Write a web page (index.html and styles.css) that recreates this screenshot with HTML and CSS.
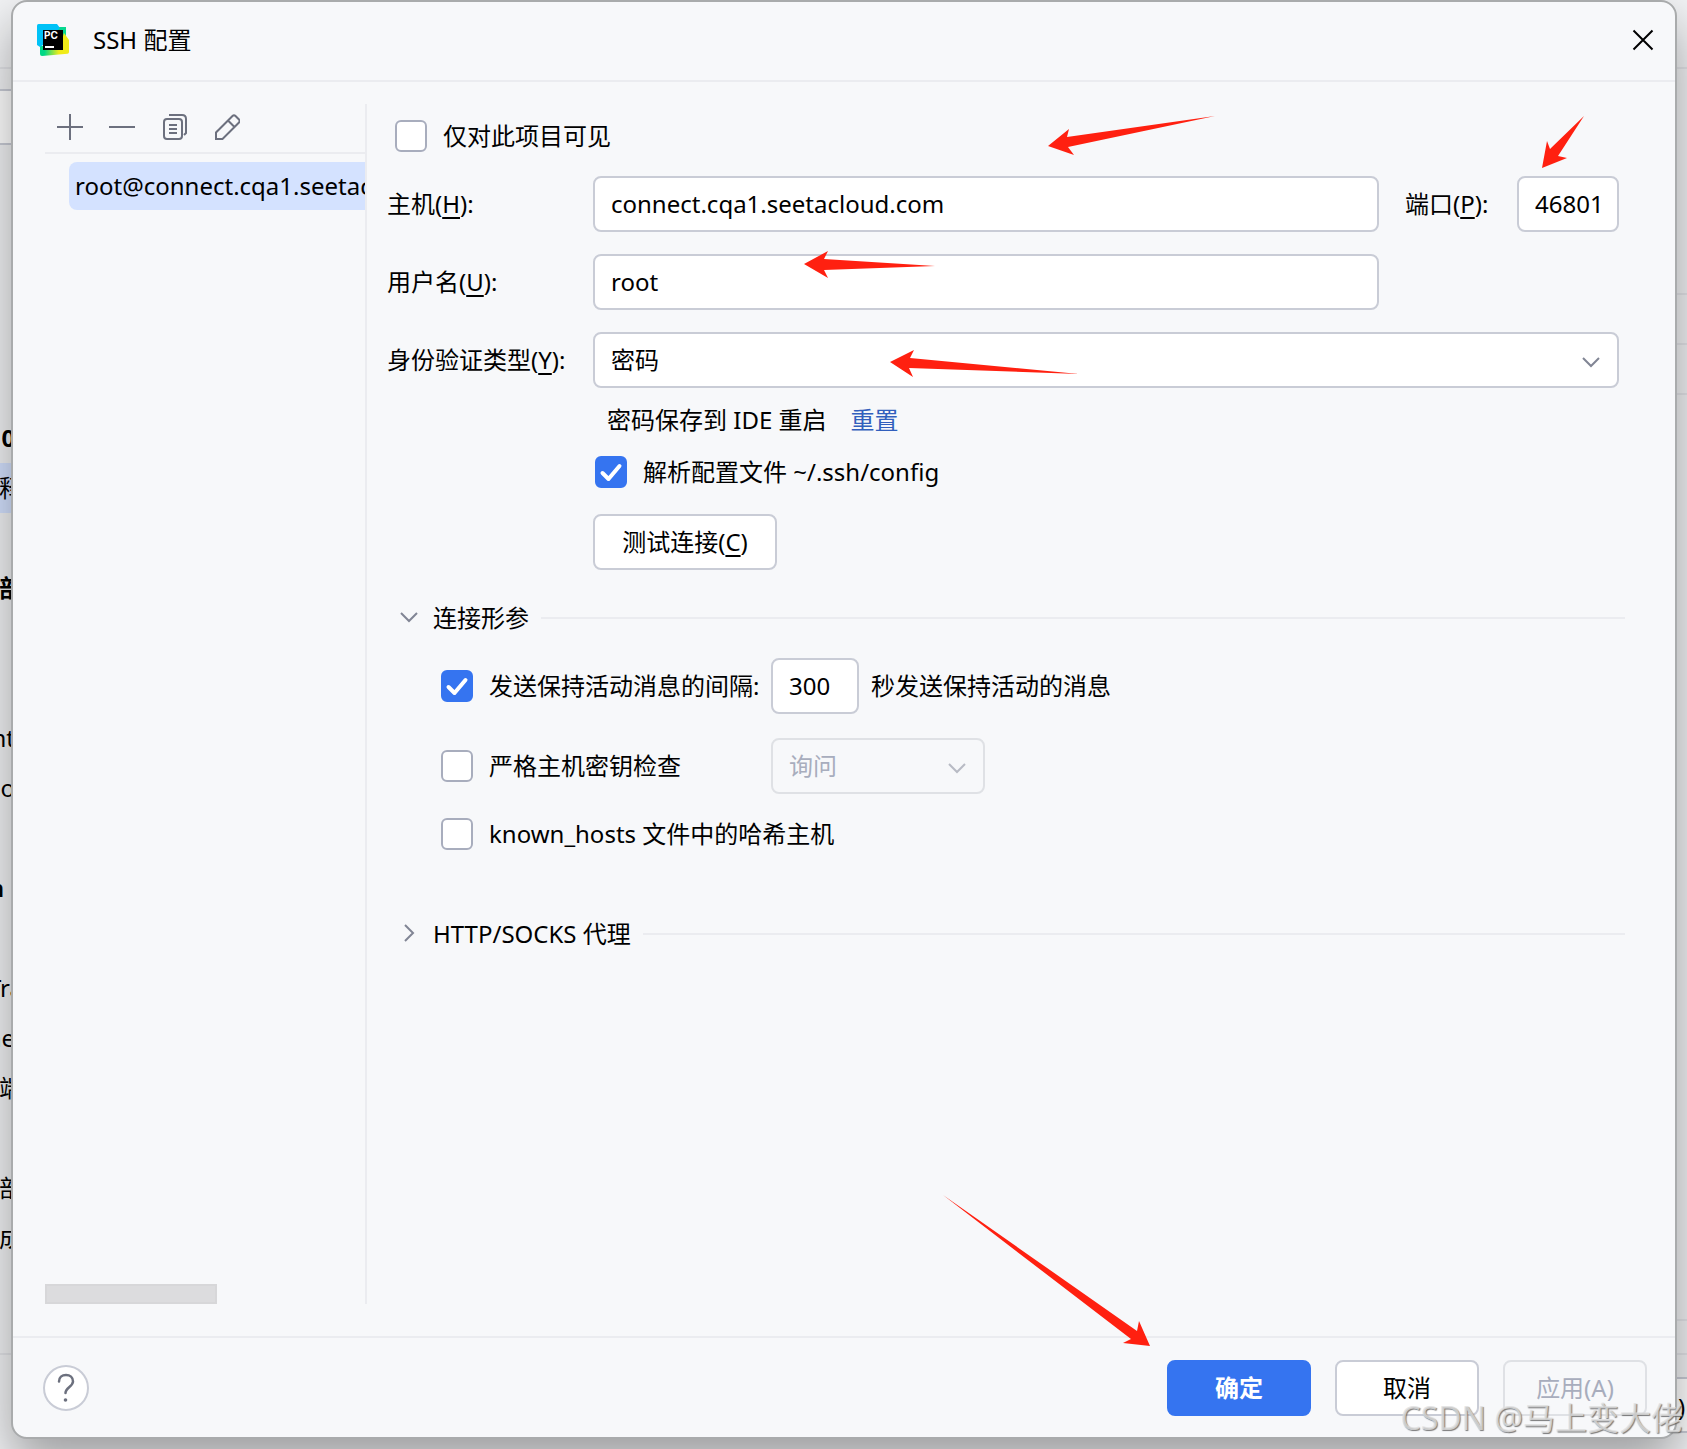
FILE: index.html
```html
<!DOCTYPE html>
<html lang="zh-CN">
<head>
<meta charset="utf-8">
<title>SSH 配置</title>
<link rel="stylesheet" href="styles.css">
</head>
<body>
<div class="screen">
  <div class="parent-window" aria-hidden="true">
    <div class="parent-left">
      <div class="parent-head"></div>
      <div class="parent-search"></div>
      <ul class="parent-list">
        <li class="strong">0-</li>
        <li class="current">释</li>
        <li></li>
        <li class="strong">部</li>
        <li></li>
        <li></li>
        <li class="mid">nt</li>
        <li class="mid">o</li>
        <li></li>
        <li class="strong near">n</li>
        <li></li>
        <li>Tra</li>
        <li class="mid">ne</li>
        <li>端</li>
        <li></li>
        <li>部</li>
        <li>成</li>
      </ul>
      <div class="parent-foot"></div>
    </div>
    <div class="parent-right">
      <div class="parent-head"></div>
      <div class="rule rule-first"></div>
      <div class="rule"></div>
      <div class="rule"></div>
      <div class="rule rule-low"></div>
      <div class="rule rule-foot"></div>
      <div class="parent-button">)</div>
    </div>
  </div>

  <main class="dialog">
    <header class="titlebar">
      <svg class="logo" viewBox="0 0 32 32" aria-hidden="true">
        <defs>
          <linearGradient id="lg" x1="0" y1="0" x2="1" y2="0">
            <stop offset="0.15" stop-color="#00d886"/><stop offset="0.65" stop-color="#f0eb18"/>
          </linearGradient>
        </defs>
        <path d="M18 3h11v12H18z" fill="#07d890"/>
        <path d="M3 22h20l4-13 5 7v12q0 1.500-1.500 1.700L5 32q-2 0-2-2z" fill="url(#lg)"/>
        <path d="M1.500 0H20l3 4-17 17-3 2-3-2V1.500Q0 0 1.500 0z" fill="#00c2f7"/>
        <path d="M6 6h20v20H6z" fill="#000"/>
        <text x="7" y="15" class="logo-text">PC</text>
        <path d="M8 22h9v2H8z" fill="#fff"/>
      </svg>
      <h1 class="title">SSH 配置</h1>
      <button class="icon-button close" type="button" aria-label="关闭">
        <svg width="22" height="22" viewBox="0 0 22 22"><path d="M1.500 1.500l19 19M20.500 1.500l-19 19" stroke="#000" stroke-width="2" fill="none"/></svg>
      </button>
    </header>

    <div class="content">
      <aside class="sidebar">
        <div class="toolbar">
          <button class="icon-button" type="button" aria-label="添加">
            <svg width="28" height="28" viewBox="0 0 28 28"><path d="M14 1v26M1 14h26"/></svg>
          </button>
          <button class="icon-button" type="button" aria-label="移除">
            <svg width="28" height="28" viewBox="0 0 28 28"><path d="M1 14h26"/></svg>
          </button>
          <button class="icon-button" type="button" aria-label="复制">
            <svg width="28" height="28" viewBox="0 0 28 28"><rect x="4" y="6" width="18" height="20" rx="3"/><path d="M9 2h13q4 0 4 4v14l-2 2M9 12h8M9 16h8M9 20h8"/></svg>
          </button>
          <button class="icon-button" type="button" aria-label="编辑">
            <svg width="28" height="28" viewBox="0 0 28 28"><path d="M4 26v-6.500L20.500 3q1.500-1.500 3 0L27 6.500q1.200 1.500 0 3L10.500 26zM16 7.500l6.500 6.500"/></svg>
          </button>
        </div>
        <ul class="hosts">
          <li class="host">root@connect.cqa1.seetacloud.com:46801</li>
        </ul>
        <div class="scrollbar"></div>
      </aside>

      <form class="form">
        <label class="check-row"><input class="check" type="checkbox">仅对此项目可见</label>

        <div class="fields">
          <label for="host">主机(<u>H</u>):</label>
          <input class="box" id="host" type="text" value="connect.cqa1.seetacloud.com">
          <label class="port-label" for="port">端口(<u>P</u>):</label>
          <input class="box" id="port" type="text" value="46801">
          <label for="user">用户名(<u>U</u>):</label>
          <input class="box user" id="user" type="text" value="root">
          <label class="auth-label" for="auth">身份验证类型(<u>Y</u>):</label>
          <div class="select auth">
            <select class="box" id="auth"><option>密码</option></select>
            <svg class="chevron" width="20" height="12" viewBox="0 0 20 12"><path d="M2 2l8 8 8-8"/></svg>
          </div>
        </div>

        <div class="extras">
          <p class="saved"><span>密码保存到 IDE 重启</span><a href="#reset">重置</a></p>
          <label class="check-row parse"><input class="check" type="checkbox" checked>解析配置文件 ~/.ssh/config</label>
          <button class="button test" type="button">测试连接(<u>C</u>)</button>
        </div>

        <section class="group">
          <h2 class="group-title">
            <svg class="chevron" width="20" height="20" viewBox="0 0 20 20"><path d="M2 5l8 8 8-8"/></svg>
            连接形参
          </h2>
          <div class="options">
            <div class="option">
              <label class="check-row"><input class="check" type="checkbox" checked>发送保持活动消息的间隔:</label>
              <input class="box interval" type="text" value="300" aria-label="间隔">
              <span>秒发送保持活动的消息</span>
            </div>
            <div class="option">
              <label class="check-row"><input class="check" type="checkbox">严格主机密钥检查</label>
              <div class="select strict">
                <select class="box" disabled aria-label="严格主机密钥检查"><option>询问</option></select>
                <svg class="chevron" width="20" height="12" viewBox="0 0 20 12"><path d="M2 2l8 8 8-8"/></svg>
              </div>
            </div>
            <label class="check-row"><input class="check" type="checkbox">known_hosts 文件中的哈希主机</label>
          </div>
        </section>

        <section class="group proxy">
          <h2 class="group-title">
            <svg class="chevron" width="20" height="20" viewBox="0 0 20 20"><path d="M6 1l8 8-8 8"/></svg>
            HTTP/SOCKS 代理
          </h2>
        </section>
      </form>
    </div>

    <footer class="footer">
      <button class="help" type="button" aria-label="帮助">
        <svg width="20" height="30" viewBox="0 0 20 30"><path d="M3 8.500C3 4.500 6 2 10 2s7 2.500 7 6.500c0 5-7.500 6-7.500 11.500" stroke="#6c707e" stroke-width="2.500" stroke-linecap="round" fill="none"/><circle cx="9.500" cy="27" r="1.800" fill="#6c707e"/></svg>
      </button>
      <button class="button primary" type="submit">确定</button>
      <button class="button" type="button">取消</button>
      <button class="button" type="button" disabled>应用(A)</button>
    </footer>
  </main>

  <svg class="arrows" width="1687" height="1449" viewBox="0 0 1687 1449" aria-hidden="true">
    <path d="M1048 146L1069 129 1067 137 1215 116 1068 147 1074 155z"/>
    <path d="M804 264L828 251 824 259 935 266 824 270 828 278z"/>
    <path d="M890 362L914 350 910 358 1079 374 909 368 913 377z"/>
    <path d="M1542 168L1547 141 1550 149 1584 116 1558 156 1567 158z"/>
    <path d="M1150 1346L1139 1321 1137 1331 943 1195 1131 1339 1123 1343z"/>
  </svg>
  <div class="watermark">CSDN @马上变大佬</div>
</div>
</body>
</html>
```
FILE: styles.css
```css
* {
  box-sizing: border-box;
}

body {
  margin: 0;
  background: #f1f2f4;
  color: #000;
  font: 24px/32px "Noto Sans", "Noto Sans CJK SC", sans-serif;
}

h1, h2, p, ul {
  margin: 0;
  padding: 0;
  font-size: 24px;
  font-weight: 400;
  list-style: none;
}

input, select, button {
  margin: 0;
  color: inherit;
  font: inherit;
}

u {
  text-decoration-thickness: 2px;
  text-underline-offset: 4px;
}

.screen {
  position: relative;
  min-height: 100vh;
  padding: 0 10px 10px 11px;
  overflow: hidden;
}

/* Window behind the dialog */
.parent-window {
  position: absolute;
  inset: 0;
  display: flex;
  justify-content: space-between;
}

.parent-left {
  width: 23px;
}

.parent-right {
  width: 20px;
}

.parent-head {
  height: 69px;
  border-bottom: 2px solid #e3e4e8;
}

.parent-search {
  height: 56px;
  margin-top: 20px;
  border: 2px solid #c9ccd6;
  border-width: 2px 0;
  background: #fff;
}

.parent-list {
  margin-top: 268px;
}

.parent-list li {
  display: flex;
  justify-content: flex-end;
  height: 50px;
  line-height: 50px;
}

.parent-list .current {
  background: #d4e2ff;
}

.parent-list .strong {
  font-weight: 700;
}

.parent-list .mid {
  padding-right: 8px;
}

.parent-list .near {
  padding-right: 19px;
}

.parent-foot {
  margin-top: 90px;
  border-top: 2px solid #e3e4e8;
}

.rule {
  height: 2px;
  margin-top: 48px;
  background: #e3e4e8;
}

.rule-first {
  margin-top: 224px;
}

.rule-low {
  margin-top: 924px;
}

.rule-foot {
  margin-top: 32px;
}

.parent-button {
  height: 56px;
  margin-top: 22px;
  padding-left: 11px;
  border: 2px solid #c9ccd6;
  border-width: 2px 0;
  background: #fff;
  line-height: 56px;
}

/* Dialog */
.dialog {
  position: relative;
  display: flex;
  flex-direction: column;
  min-height: calc(100vh - 10px);
  border: 2px solid #a9abac;
  border-radius: 16px;
  background: #f7f8fa;
  box-shadow: 0 24px 50px rgba(0, 0, 0, 0.35);
}

.titlebar {
  display: flex;
  align-items: center;
  height: 80px;
  padding: 0 21px 2px 24px;
  border-bottom: 2px solid #ebecf0;
}

.logo {
  width: 32px;
  height: 32px;
}

.logo-text {
  fill: #fff;
  font: 700 10px "Inter", sans-serif;
}

.title {
  flex: 1;
  margin-left: 24px;
}

.icon-button {
  display: flex;
  padding: 0;
  border: 0;
  background: none;
}

.content {
  display: flex;
  flex: 1;
  padding: 22px 50px 32px 32px;
}

.sidebar {
  display: flex;
  flex-direction: column;
  width: 322px;
  border-right: 2px solid #ebecf0;
}

.toolbar {
  display: flex;
  gap: 24px;
  height: 50px;
  padding: 9px 11px;
  border-bottom: 2px solid #ebecf0;
}

.toolbar svg {
  fill: none;
  stroke: #6c707e;
  stroke-width: 2;
}

.hosts {
  flex: 1;
  padding: 8px 0 0 24px;
}

.host {
  height: 48px;
  padding-left: 6px;
  border-radius: 8px 0 0 8px;
  background: #d4e2ff;
  line-height: 48px;
  overflow: hidden;
  white-space: nowrap;
}

.scrollbar {
  width: 172px;
  height: 20px;
  border: 2px solid #d7d7d9;
  background: #dcdcde;
}

.form {
  flex: 1;
  padding: 16px 0 0 20px;
}

.check-row {
  display: flex;
  align-items: center;
  gap: 16px;
}

.form > .check-row {
  padding-left: 8px;
}

.check {
  flex: none;
  width: 32px;
  height: 32px;
  border: 2px solid #a8adbd;
  border-radius: 6px;
  background: #fff;
  appearance: none;
}

.check:checked {
  border-color: #3574f0;
  background: #3574f0 url("data:image/svg+xml,%3Csvg xmlns='http://www.w3.org/2000/svg' viewBox='0 0 28 28'%3E%3Cpath d='M5.500 15l6 6L22.500 8' fill='none' stroke='white' stroke-width='4' stroke-linecap='round' stroke-linejoin='round'/%3E%3C/svg%3E") center / 28px;
}

.fields {
  display: grid;
  grid-template-columns: 206px 1fr 138px 102px;
  gap: 22px 0;
  align-items: center;
  margin: 24px 6px 0 0;
}

.box {
  width: 100%;
  height: 56px;
  padding: 0 16px 2px;
  border: 2px solid #c9ccd6;
  border-radius: 8px;
  background: #fff;
  appearance: none;
}

select.box {
  padding: 0 16px;
}

#port {
  padding-right: 8px;
}

.port-label {
  padding-left: 26px;
}

.user {
  grid-column: 2;
}

.auth-label {
  grid-column: 1;
}

.auth {
  grid-column: 2 / 5;
}

.select {
  display: flex;
  position: relative;
}

.select .chevron {
  position: absolute;
  top: 24px;
  right: 18px;
  pointer-events: none;
}

.chevron {
  flex: none;
  fill: none;
  stroke: #818594;
  stroke-width: 2;
}

.box:disabled {
  border-color: #dfe1e5;
  background: transparent;
  color: #a8adbd;
  opacity: 1;
}

.box:disabled + .chevron {
  stroke: #b8bbc4;
}

.extras {
  padding: 16px 0 0 206px;
}

.saved {
  display: flex;
  gap: 24px;
  padding-left: 14px;
}

.saved a {
  color: #315fbd;
  text-decoration: none;
}

.parse {
  margin: 20px 0 26px;
  padding-left: 2px;
}

.button {
  width: 144px;
  height: 56px;
  padding: 0;
  border: 2px solid #c9ccd6;
  border-radius: 8px;
  background: #fff;
}

.button.test {
  display: block;
  width: 184px;
}

.group {
  margin-top: 32px;
}

.group-title {
  display: flex;
  align-items: center;
  gap: 12px;
  padding-left: 12px;
}

.group-title .chevron {
  margin-right: 2px;
}

.group-title::after {
  flex: 1;
  height: 2px;
  background: #ebecf0;
  content: "";
}

.options {
  display: grid;
  gap: 24px;
  padding: 24px 0 0 54px;
}

.option {
  display: flex;
  align-items: center;
}

.option .check-row {
  width: 330px;
}

.interval {
  width: 88px;
  margin-right: 12px;
}

.strict {
  width: 214px;
}

.proxy {
  margin-top: 68px;
}

.footer {
  display: flex;
  align-items: center;
  gap: 24px;
  height: 101px;
  padding: 0 28px 0 30px;
  border-top: 2px solid #ebecf0;
}

.help {
  display: grid;
  place-items: center;
  width: 46px;
  height: 46px;
  margin-right: auto;
  padding: 0;
  border: 2px solid #c9ccd6;
  border-radius: 50%;
  background: #fff;
}

.button.primary {
  border-color: #3574f0;
  background: #3574f0;
  color: #fff;
  font-weight: 700;
}

.button:disabled {
  border-color: #dfe1e5;
  background: transparent;
  color: #a8adbd;
}

/* Annotations over the dialog */
.arrows {
  position: absolute;
  top: 0;
  left: 0;
  fill: #ff2010;
  pointer-events: none;
}

.watermark {
  position: absolute;
  right: 4px;
  bottom: 11px;
  color: rgba(225, 225, 225, 0.8);
  font-size: 32px;
  line-height: 40px;
  text-shadow: 1px 1px 1px rgba(90, 90, 90, 0.8);
}
```
